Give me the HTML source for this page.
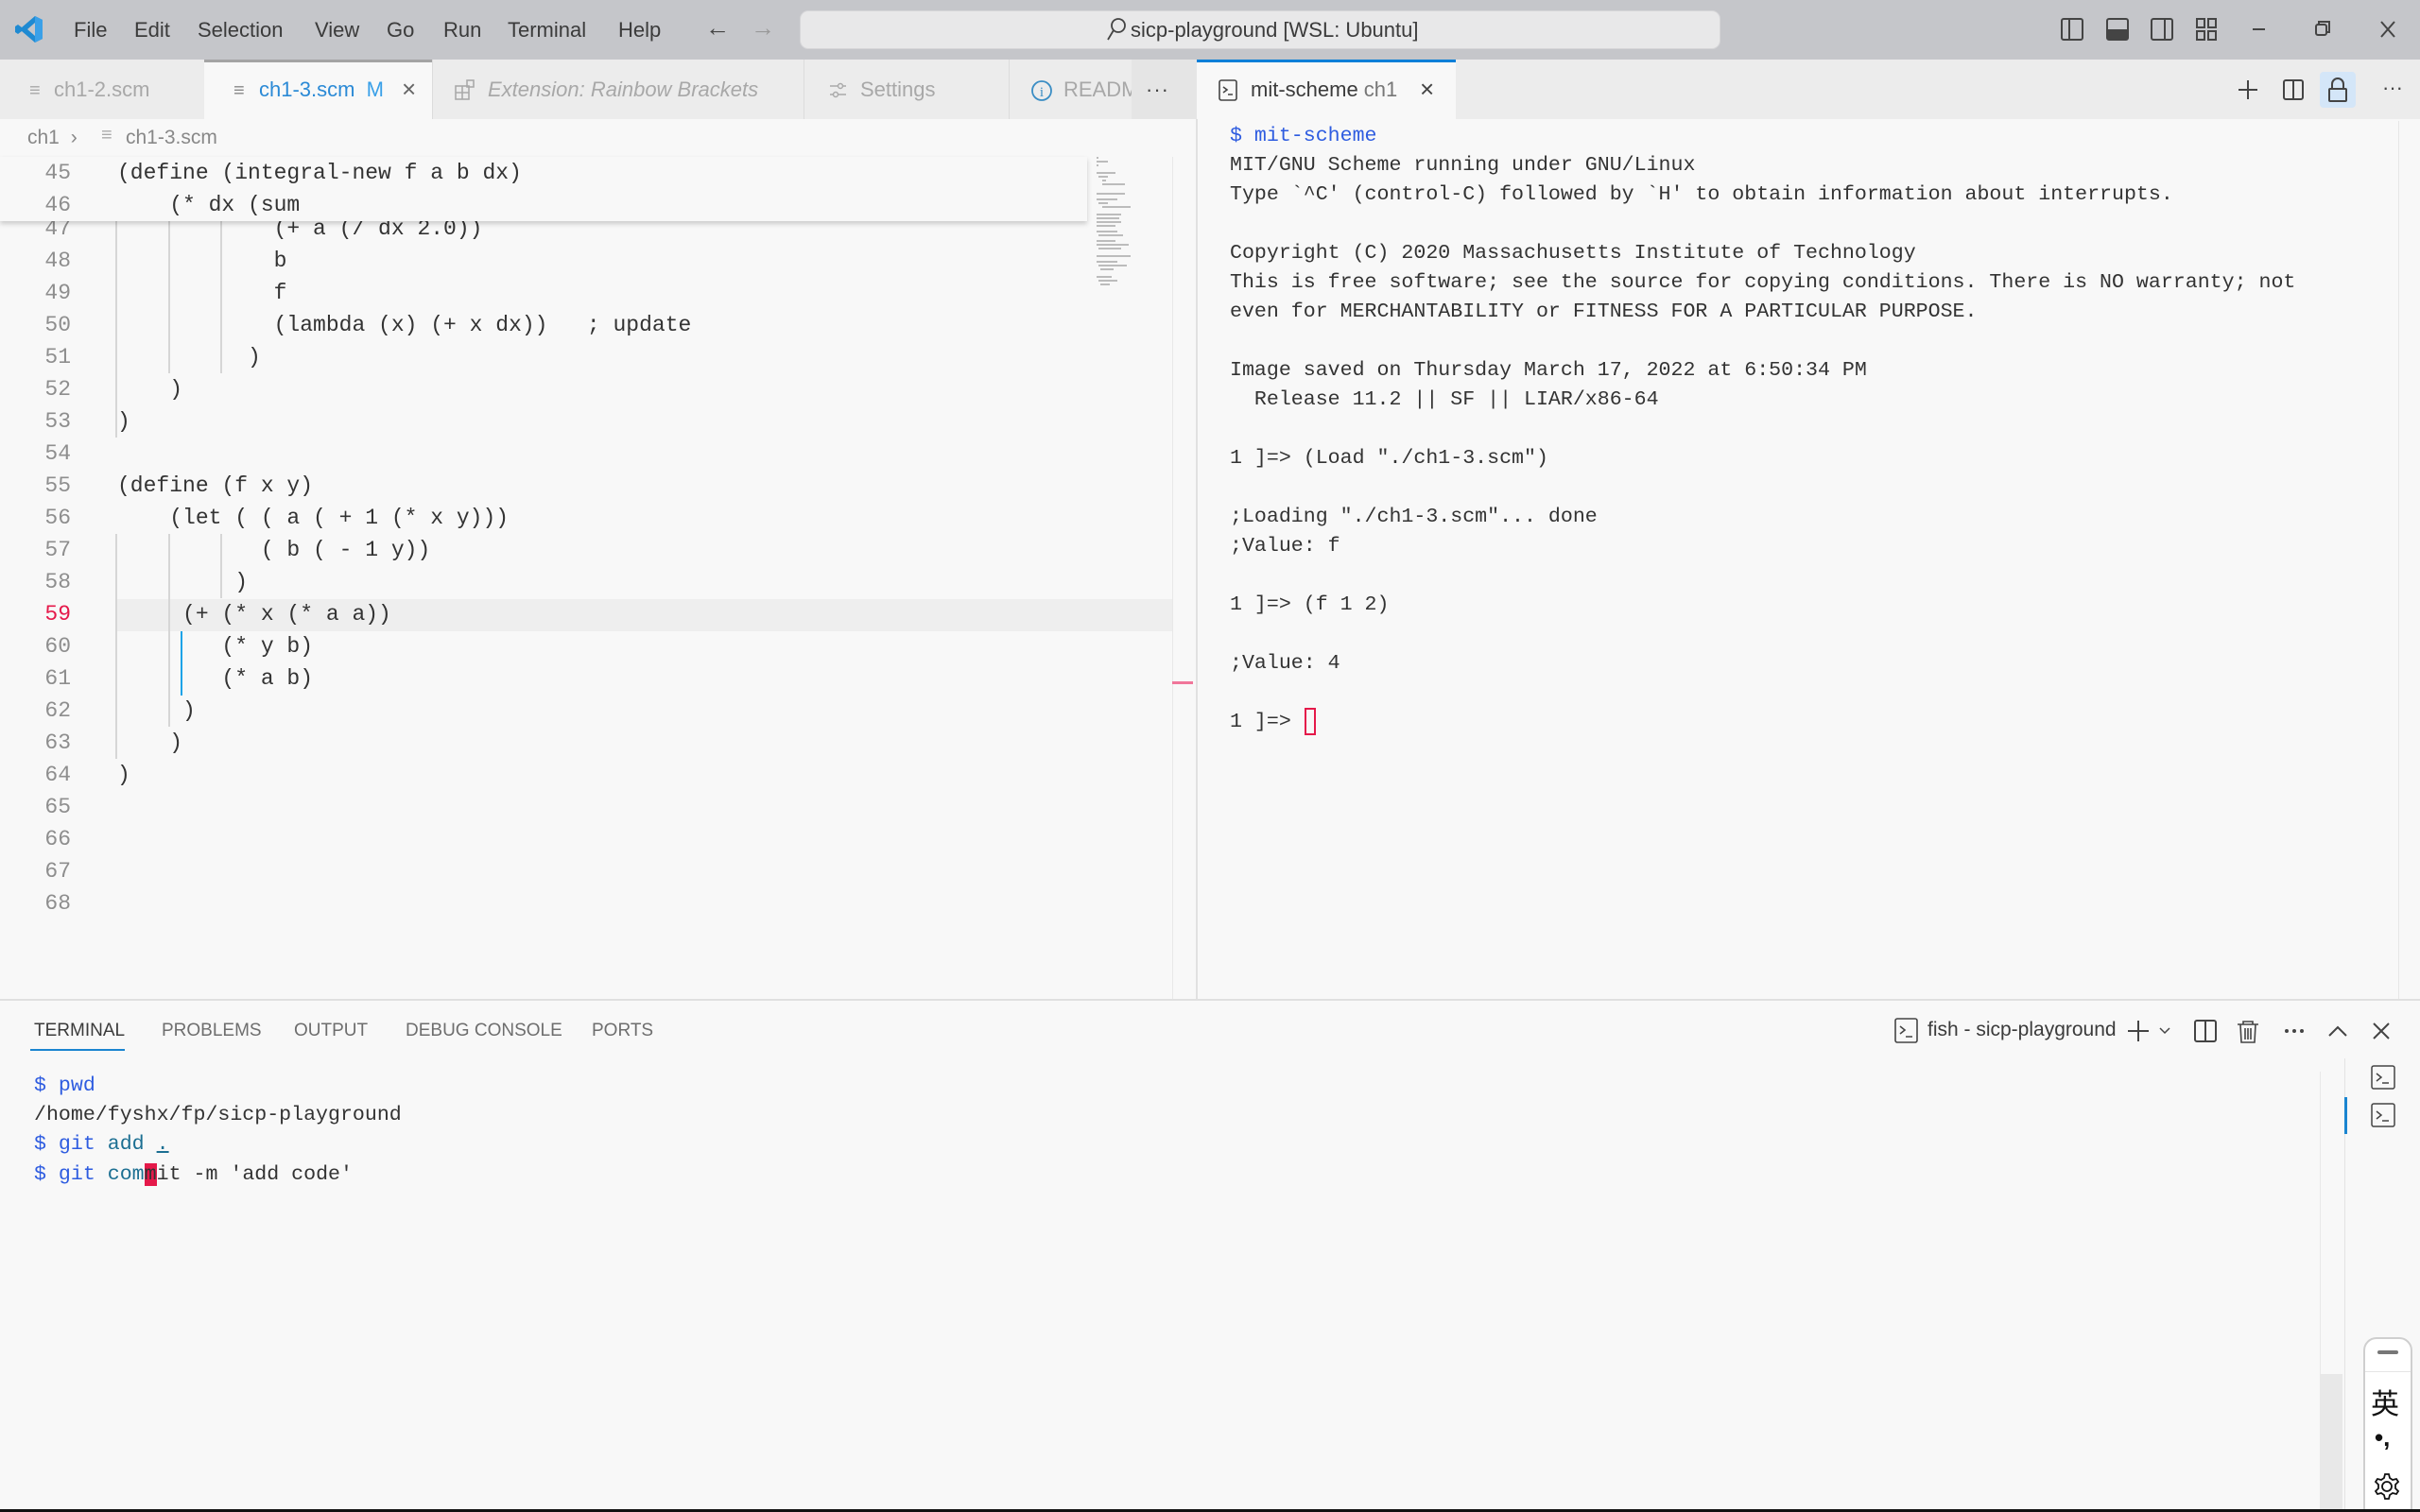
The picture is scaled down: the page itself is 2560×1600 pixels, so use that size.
<!DOCTYPE html>
<html><head><meta charset="utf-8"><style>
*{margin:0;padding:0;box-sizing:border-box}
body{width:2560px;height:1600px;overflow:hidden;background:#f8f8f8;position:relative;font-family:"Liberation Sans",sans-serif;color:#3b3b3b}
.a{position:absolute}
.mono{font-family:"Liberation Mono",monospace;white-space:pre}
.menu span{position:absolute;top:19px;font-size:22px;color:#3b3b3b}
.tab{position:absolute;top:63px;height:63px;font-size:22px;color:#a8a8a8;line-height:63px}
.ln{position:absolute;left:0;width:75px;text-align:right;font-size:23px;color:#8e8e8e;font-family:"Liberation Mono",monospace;line-height:34px;height:34px}
.cl{position:absolute;left:124px;font-size:23px;color:#333;font-family:"Liberation Mono",monospace;white-space:pre;line-height:34px;height:34px}
.g{position:absolute;width:2px;background:#d6d6d6}
.tl{position:absolute;left:1301px;font-size:21.6px;color:#333;font-family:"Liberation Mono",monospace;white-space:pre;line-height:31px}
.bl{position:absolute;left:36px;font-size:21.6px;color:#333;font-family:"Liberation Mono",monospace;white-space:pre;line-height:31px}
</style></head><body>
<div class="a" style="left:0;top:0;width:2560px;height:63px;background:#c5c6ca"></div>
<svg class="a" style="left:16px;top:16px" width="30" height="30" viewBox="0 0 30 30"><path d="M21 1 L29 5 V25 L21 29 L7 17 L3 20 L0 18 V12 L3 10 L7 13 Z M21 8 L13 15 L21 22 Z" fill="#1f8ad2"/><path d="M21 1 L29 5 V25 L21 29 Z" fill="#3aa0e8"/></svg>
<div class="menu"><span style="left:78px">File</span><span style="left:142px">Edit</span><span style="left:209px">Selection</span><span style="left:333px">View</span><span style="left:409px">Go</span><span style="left:469px">Run</span><span style="left:537px">Terminal</span><span style="left:654px">Help</span></div>
<div class="a" style="left:746px;top:14px;font-size:26px;color:#444">←</div>
<div class="a" style="left:794px;top:14px;font-size:26px;color:#999">→</div>
<div class="a" style="left:846px;top:11px;width:974px;height:41px;background:#e8e8e9;border-radius:9px;border:1px solid #d6d6d8"></div>
<svg class="a" style="left:1170px;top:18px" width="22" height="26" viewBox="0 0 22 26"><circle cx="13" cy="9" r="7" fill="none" stroke="#444" stroke-width="1.8"/><path d="M8 14 L2 24" stroke="#444" stroke-width="1.8"/></svg>
<div class="a" style="left:1196px;top:19px;font-size:22px;color:#3b3b3b">sicp-playground [WSL: Ubuntu]</div>
<svg class="a" style="left:2176px;top:16px" width="370" height="30" viewBox="0 0 370 30">
<g fill="none" stroke="#444" stroke-width="2"><rect x="5" y="4" width="22" height="22" rx="2"/><path d="M13 4V26"/>
<rect x="53" y="4" width="22" height="22" rx="2"/><rect x="100" y="4" width="22" height="22" rx="2"/><path d="M114 4V26"/>
<rect x="148" y="4" width="8" height="9"/><rect x="148" y="17" width="8" height="9"/><rect x="160" y="4" width="8" height="9"/><rect x="160" y="17" width="8" height="9"/>
<path d="M207 15H220"/><rect x="274" y="10" width="11" height="11" rx="2"/><path d="M277 10V7H288V18H285"/><path d="M343 7L357 23M357 7L343 23"/></g>
<rect x="53" y="15" width="22" height="11" fill="#444"/></svg>
<div class="a" style="left:0;top:63px;width:1266px;height:63px;background:#ececec"></div>
<div class="a" style="left:1266px;top:63px;width:1294px;height:63px;background:#ececec"></div>
<div class="a" style="left:216px;top:63px;width:241px;height:63px;background:#f8f8f8;border-top:3px solid #a4a4a4"></div>
<div class="a" style="left:457px;top:63px;width:1px;height:63px;background:#dcdcdc"></div>
<div class="a" style="left:850px;top:63px;width:1px;height:63px;background:#dcdcdc"></div>
<div class="a" style="left:1067px;top:63px;width:1px;height:63px;background:#dcdcdc"></div>
<div class="a" style="left:1197px;top:63px;width:69px;height:63px;background:#e5e5e5"></div>
<div class="tab" style="left:31px"><span style="font-size:20px">≡</span></div>
<div class="tab" style="left:57px">ch1-2.scm</div>
<div class="tab" style="left:247px;color:#888"><span style="font-size:20px">≡</span></div>
<div class="tab" style="left:274px;color:#2b8ad6">ch1-3.scm <span style="color:#3aa0e8;margin-left:6px">M</span></div>
<div class="tab" style="left:425px;color:#666;font-size:26px">×</div>
<svg class="a" style="left:481px;top:84px" width="22" height="22" viewBox="0 0 22 22"><g fill="none" stroke="#aaa" stroke-width="1.6"><rect x="1" y="7" width="14" height="14"/><path d="M1 14H15M8 7V21"/><rect x="13" y="1" width="7" height="7"/></g></svg>
<div class="tab" style="left:516px;font-style:italic">Extension: Rainbow Brackets</div>
<svg class="a" style="left:877px;top:86px" width="20" height="20" viewBox="0 0 20 20"><g fill="none" stroke="#aaa" stroke-width="1.5"><path d="M1 5H18M1 14H18"/><circle cx="12" cy="5" r="2.5" fill="#ececec"/><circle cx="7" cy="14" r="2.5" fill="#ececec"/></g></svg>
<div class="tab" style="left:910px">Settings</div>
<svg class="a" style="left:1090px;top:83px" width="24" height="26" viewBox="0 0 24 26"><circle cx="12" cy="13" r="10" fill="none" stroke="#3a8dc4" stroke-width="1.8"/><text x="12" y="19" font-size="15" text-anchor="middle" fill="#3a8dc4" font-family="Liberation Serif">i</text></svg>
<div class="tab" style="left:1125px;width:72px;overflow:hidden">README</div>
<div class="tab" style="left:1212px;color:#444;font-size:22px;letter-spacing:1px">···</div>
<div class="a" style="left:1266px;top:63px;width:274px;height:63px;background:#f8f8f8;border-top:3px solid #0a7fd8"></div>
<svg class="a" style="left:1289px;top:84px" width="22" height="24" viewBox="0 0 22 24"><g fill="none" stroke="#444" stroke-width="1.6"><rect x="1" y="1" width="18" height="21" rx="2"/><path d="M5 8L9 11L5 14M10 16H15"/></g></svg>
<div class="tab" style="left:1323px;color:#3b3b3b">mit-scheme <span style="color:#777">ch1</span></div>
<div class="tab" style="left:1502px;color:#444;font-size:26px">×</div>
<svg class="a" style="left:2362px;top:76px" width="190" height="38" viewBox="0 0 190 38"><rect x="92" y="0" width="38" height="38" rx="4" fill="#d4e6f8"/><g fill="none" stroke="#444" stroke-width="2"><path d="M16 9V29M6 19H26"/><rect x="54" y="9" width="20" height="20" rx="2"/><path d="M64 9V29"/><rect x="102" y="18" width="18" height="13" rx="1"/><path d="M105 18V13a6 6 0 0 1 12 0V18"/></g><text x="158" y="24" font-size="22" fill="#444">···</text></svg>
<div class="a" style="left:29px;top:134px;font-size:21px;color:#888">ch1 <span style="margin-left:6px">›</span></div>
<div class="a" style="left:107px;top:132px;font-size:20px;color:#aaa">≡</div>
<div class="a" style="left:133px;top:134px;font-size:21px;color:#888">ch1-3.scm</div>
<div class="a" style="left:122px;top:634px;width:1118px;height:34px;background:#eeeeee"></div>
<div class="g" style="left:122px;top:225px;height:238px"></div>
<div class="g" style="left:178px;top:225px;height:170px"></div>
<div class="g" style="left:233px;top:225px;height:170px"></div>
<div class="g" style="left:122px;top:565px;height:238px"></div>
<div class="g" style="left:178px;top:565px;height:204px"></div>
<div class="g" style="left:233px;top:565px;height:68px"></div>
<div class="a" style="left:191px;top:668px;width:2px;height:68px;background:#1aa3e8"></div>
<div class="ln" style="top:225px">47</div><div class="cl" style="top:225px">            (+ a (/ dx 2.0))</div>
<div class="ln" style="top:259px">48</div><div class="cl" style="top:259px">            b</div>
<div class="ln" style="top:293px">49</div><div class="cl" style="top:293px">            f</div>
<div class="ln" style="top:327px">50</div><div class="cl" style="top:327px">            (lambda (x) (+ x dx))   ; update</div>
<div class="ln" style="top:361px">51</div><div class="cl" style="top:361px">          )</div>
<div class="ln" style="top:395px">52</div><div class="cl" style="top:395px">    )</div>
<div class="ln" style="top:429px">53</div><div class="cl" style="top:429px">)</div>
<div class="ln" style="top:463px">54</div>
<div class="ln" style="top:497px">55</div><div class="cl" style="top:497px">(define (f x y)</div>
<div class="ln" style="top:531px">56</div><div class="cl" style="top:531px">    (let ( ( a ( + 1 (* x y)))</div>
<div class="ln" style="top:565px">57</div><div class="cl" style="top:565px">           ( b ( - 1 y))</div>
<div class="ln" style="top:599px">58</div><div class="cl" style="top:599px">         )</div>
<div class="ln" style="top:633px;color:#e5194a">59</div><div class="cl" style="top:633px">     (+ (* x (* a a))</div>
<div class="ln" style="top:667px">60</div><div class="cl" style="top:667px">        (* y b)</div>
<div class="ln" style="top:701px">61</div><div class="cl" style="top:701px">        (* a b)</div>
<div class="ln" style="top:735px">62</div><div class="cl" style="top:735px">     )</div>
<div class="ln" style="top:769px">63</div><div class="cl" style="top:769px">    )</div>
<div class="ln" style="top:803px">64</div><div class="cl" style="top:803px">)</div>
<div class="ln" style="top:837px">65</div>
<div class="ln" style="top:871px">66</div>
<div class="ln" style="top:905px">67</div>
<div class="ln" style="top:939px">68</div>
<div class="a" style="left:0;top:166px;width:1150px;height:68px;background:#f8f8f8;box-shadow:0 3px 5px rgba(0,0,0,0.18)"></div>
<div class="ln" style="top:166px">45</div><div class="cl" style="top:166px">(define (integral-new f a b dx)</div>
<div class="ln" style="top:200px">46</div><div class="cl" style="top:200px">    (* dx (sum</div>
<svg class="a" style="left:1156px;top:165px" width="60" height="140" viewBox="0 0 60 140"><g stroke="#999" stroke-width="1.2">
<path d="M4 2h2M4 6h12M4 10h2M4 18h20M6 22h10M10 26h4M10 30h24M4 40h30M4 46h22M6 50h10M10 54h30M4 62h26M4 66h24M4 70h26M4 74h20M4 80h22M6 84h26M4 90h20M4 94h34M6 98h24M4 106h36M4 112h22M6 116h30M8 120h14M4 128h16M6 132h20M8 136h10"/></g></svg>
<div class="a" style="left:1240px;top:166px;width:26px;height:892px;border-left:1px solid #e8e8e8"></div>
<div class="a" style="left:1265px;top:126px;width:2px;height:932px;background:#e1e1e1"></div>
<div class="a" style="left:1240px;top:721px;width:22px;height:3px;background:#f0769a"></div>
<div class="tl" style="top:129px;color:#2e5ce0">$ mit-scheme</div>
<div class="tl" style="top:160px">MIT/GNU Scheme running under GNU/Linux</div>
<div class="tl" style="top:191px">Type `^C' (control-C) followed by `H' to obtain information about interrupts.</div>
<div class="tl" style="top:253px">Copyright (C) 2020 Massachusetts Institute of Technology</div>
<div class="tl" style="top:284px">This is free software; see the source for copying conditions. There is NO warranty; not</div>
<div class="tl" style="top:315px">even for MERCHANTABILITY or FITNESS FOR A PARTICULAR PURPOSE.</div>
<div class="tl" style="top:377px">Image saved on Thursday March 17, 2022 at 6:50:34 PM</div>
<div class="tl" style="top:408px">  Release 11.2 || SF || LIAR/x86-64</div>
<div class="tl" style="top:470px">1 ]=&gt; (Load "./ch1-3.scm")</div>
<div class="tl" style="top:532px">;Loading "./ch1-3.scm"... done</div>
<div class="tl" style="top:563px">;Value: f</div>
<div class="tl" style="top:625px">1 ]=&gt; (f 1 2)</div>
<div class="tl" style="top:687px">;Value: 4</div>
<div class="tl" style="top:749px">1 ]=&gt; </div>
<div class="a" style="left:1380px;top:749px;width:12px;height:29px;border:2px solid #e5194a"></div>
<div class="a" style="left:2537px;top:128px;width:1px;height:930px;background:#e6e6e6"></div>
<div class="a" style="left:0;top:1057px;width:2560px;height:2px;background:#e0e0e0"></div>
<div class="a" style="left:36px;top:1080px;font-size:19px;color:#3b3b3b">TERMINAL</div>
<div class="a" style="left:32px;top:1110px;width:100px;height:2px;background:#1a85d0"></div>
<div class="a" style="left:171px;top:1080px;font-size:19px;color:#6e6e6e">PROBLEMS</div>
<div class="a" style="left:311px;top:1080px;font-size:19px;color:#6e6e6e">OUTPUT</div>
<div class="a" style="left:429px;top:1080px;font-size:19px;color:#6e6e6e">DEBUG CONSOLE</div>
<div class="a" style="left:626px;top:1080px;font-size:19px;color:#6e6e6e">PORTS</div>
<svg class="a" style="left:2004px;top:1077px" width="26" height="27" viewBox="0 0 26 27"><g fill="none" stroke="#444" stroke-width="1.6"><rect x="1" y="1" width="23" height="25" rx="2"/><path d="M6 9L11 13L6 17M12 20H19"/></g></svg>
<div class="a" style="left:2039px;top:1078px;font-size:21px;color:#3b3b3b">fish - sicp-playground</div>
<svg class="a" style="left:2245px;top:1074px" width="305" height="34" viewBox="0 0 305 34"><g fill="none" stroke="#444" stroke-width="2"><path d="M17 6V28M6 17H28"/><path d="M40 14L45 19L50 14" stroke-width="1.5"/><rect x="77" y="6" width="22" height="22" rx="2"/><path d="M88 6V28"/><path d="M122 10H144M128 10V7H138V10M125 10L126 29H140L141 10M130 14V26M133 14V26M136 14V26" stroke-width="1.6"/><path d="M219 22L228 13L237 22"/><path d="M266 9L282 25M282 9L266 25"/></g><circle cx="174" cy="17" r="2" fill="#444"/><circle cx="182" cy="17" r="2" fill="#444"/><circle cx="190" cy="17" r="2" fill="#444"/></svg>
<div class="bl" style="top:1134px;color:#2e5ce0">$ pwd</div>
<div class="bl" style="top:1165px">/home/fyshx/fp/sicp-playground</div>
<div class="bl" style="top:1196px"><span style="color:#2e5ce0">$ git</span> <span style="color:#1c6f92">add <u>.</u></span></div>
<div class="bl" style="top:1228px"><span style="color:#2e5ce0">$ git</span> <span style="color:#1c6f92">com</span><span style="background:#e5194a;color:#333">m</span>it -m 'add code'</div>
<div class="a" style="left:2454px;top:1134px;width:24px;height:466px;border-left:1px solid #e8e8e8"></div>
<div class="a" style="left:2454px;top:1454px;width:24px;height:146px;background:#e8e8e8"></div>
<div class="a" style="left:2480px;top:1120px;width:1px;height:480px;background:#e3e3e3"></div>
<div class="a" style="left:2480px;top:1161px;width:3px;height:39px;background:#1a85d0"></div>
<svg class="a" style="left:2508px;top:1127px" width="26" height="70" viewBox="0 0 26 70"><g fill="none" stroke="#444" stroke-width="1.5"><rect x="1" y="1" width="24" height="24" rx="2"/><path d="M6 9L11 13L6 17M12 19H19"/><rect x="1" y="41" width="24" height="24" rx="2"/><path d="M6 49L11 53L6 57M12 59H19"/></g></svg>
<div class="a" style="left:2500px;top:1415px;width:52px;height:185px;background:#fff;border:2px solid #cfcfcf;border-radius:14px 14px 0 0"></div>
<div class="a" style="left:2515px;top:1429px;width:22px;height:4px;background:#777;border-radius:2px"></div>
<div class="a" style="left:2502px;top:1451px;width:48px;height:1px;background:#e5e5e5"></div>
<div class="a" style="left:2508px;top:1461px;font-size:30px;color:#111;font-family:'Noto Sans CJK SC',sans-serif">英</div>
<div class="a" style="left:2512px;top:1506px;font-size:26px;color:#111;font-weight:bold">•,</div>
<svg class="a" style="left:2510px;top:1558px" width="30" height="30" viewBox="0 0 30 30"><g fill="none" stroke="#111" stroke-width="1.8"><circle cx="15" cy="15" r="5"/><path d="M13 2h4l1 4 3 2 4-1 2 3-3 3v4l3 3-2 3-4-1-3 2-1 4h-4l-1-4-3-2-4 1-2-3 3-3v-4l-3-3 2-3 4 1 3-2z"/></g></svg>
<div class="a" style="left:0;top:1597px;width:2560px;height:3px;background:#111"></div>
</body></html>
